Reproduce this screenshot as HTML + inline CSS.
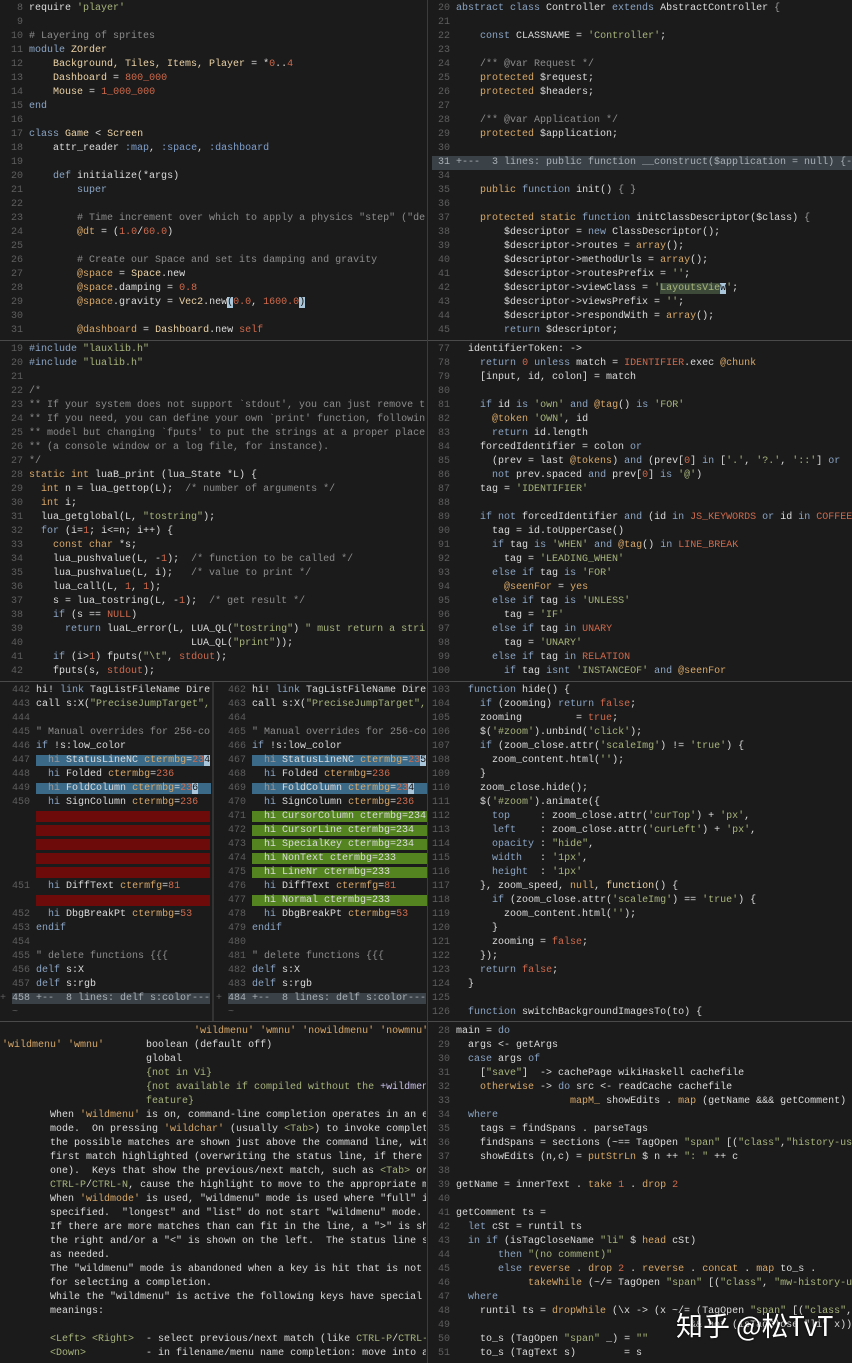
<!DOCTYPE html>
<html><head><meta charset="utf-8"><style>
html,body{margin:0;padding:0;background:#1b1b1b;width:852px;height:1363px;overflow:hidden}
.p{position:absolute;overflow:hidden;font:10px/14px "Liberation Mono",monospace;color:#dcdcdc;white-space:normal}
.p div{height:14px;white-space:pre}
.n{color:#5e5e5e}.k{color:#8aa4c4}.s{color:#a7b47c}.c{color:#8c8c8c}.d{color:#cf6a4c}.y{color:#ecd3a6}.o{color:#d8a868}.sy{color:#7f9fcc}.g{color:#9a9a9a}
.fold{background:#3a4147;color:#a9b0b6}
.hb{background:#3b6a88}.hr{background:#6d0b0b}.hg{background:#53841f}
.cur{background:#a9c6da;color:#111}
.hl{position:absolute;left:0;width:852px;height:1px;background:#4a4a4a}
.vl{position:absolute;width:1px;background:#3c3c3c}
</style></head><body>

<div class="p" style="left:5px;top:2px;width:421px;height:338px">
<div><span class="n">  8 </span>require <span class="s">'player'</span></div>
<div><span class="n">  9 </span></div>
<div><span class="n"> 10 </span><span class="c"># Layering of sprites</span></div>
<div><span class="n"> 11 </span><span class="k">module</span> <span class="y">ZOrder</span></div>
<div><span class="n"> 12 </span>    <span class="y">Background, Tiles, Items, Player</span> = *<span class="d">0</span>..<span class="d">4</span></div>
<div><span class="n"> 13 </span>    <span class="y">Dashboard</span> = <span class="d">800_000</span></div>
<div><span class="n"> 14 </span>    <span class="y">Mouse</span> = <span class="d">1_000_000</span></div>
<div><span class="n"> 15 </span><span class="k">end</span></div>
<div><span class="n"> 16 </span></div>
<div><span class="n"> 17 </span><span class="k">class</span> <span class="y">Game</span> &lt; <span class="y">Screen</span></div>
<div><span class="n"> 18 </span>    attr_reader <span class="sy">:map</span>, <span class="sy">:space</span>, <span class="sy">:dashboard</span></div>
<div><span class="n"> 19 </span></div>
<div><span class="n"> 20 </span>    <span class="k">def</span> initialize(*args)</div>
<div><span class="n"> 21 </span>        <span class="k">super</span></div>
<div><span class="n"> 22 </span></div>
<div><span class="n"> 23 </span>        <span class="c"># Time increment over which to apply a physics "step" ("de</span></div>
<div><span class="n"> 24 </span>        <span class="o">@dt</span> = (<span class="d">1.0</span>/<span class="d">60.0</span>)</div>
<div><span class="n"> 25 </span></div>
<div><span class="n"> 26 </span>        <span class="c"># Create our Space and set its damping and gravity</span></div>
<div><span class="n"> 27 </span>        <span class="o">@space</span> = <span class="y">Space</span>.new</div>
<div><span class="n"> 28 </span>        <span class="o">@space</span>.damping = <span class="d">0.8</span></div>
<div><span class="n"> 29 </span>        <span class="o">@space</span>.gravity = <span class="y">Vec2</span>.new<span class="cur">(</span><span class="d">0.0</span>, <span class="d">1600.0</span><span class="cur">)</span></div>
<div><span class="n"> 30 </span></div>
<div><span class="n"> 31 </span>        <span class="o">@dashboard</span> = <span class="y">Dashboard</span>.new <span class="d">self</span></div>
</div>

<div class="p" style="left:432px;top:2px;width:420px;height:338px">
<div><span class="n"> 20 </span><span class="k">abstract class</span> Controller <span class="k">extends</span> AbstractController <span class="g">{</span></div>
<div><span class="n"> 21 </span></div>
<div><span class="n"> 22 </span>    <span class="k">const</span> CLASSNAME = <span class="s">'Controller'</span>;</div>
<div><span class="n"> 23 </span></div>
<div><span class="n"> 24 </span>    <span class="c">/** @var Request */</span></div>
<div><span class="n"> 25 </span>    <span class="o">protected</span> $request;</div>
<div><span class="n"> 26 </span>    <span class="o">protected</span> $headers;</div>
<div><span class="n"> 27 </span></div>
<div><span class="n"> 28 </span>    <span class="c">/** @var Application */</span></div>
<div><span class="n"> 29 </span>    <span class="o">protected</span> $application;</div>
<div><span class="n"> 30 </span></div>
<div class="fold"> 31 +---  3 lines: public function __construct($application = null) {-</div>
<div><span class="n"> 34 </span></div>
<div><span class="n"> 35 </span>    <span class="o">public</span> <span class="k">function</span> init() <span class="g">{ }</span></div>
<div><span class="n"> 36 </span></div>
<div><span class="n"> 37 </span>    <span class="o">protected static</span> <span class="k">function</span> initClassDescriptor($class) <span class="g">{</span></div>
<div><span class="n"> 38 </span>        $descriptor = <span class="k">new</span> ClassDescriptor();</div>
<div><span class="n"> 39 </span>        $descriptor-&gt;routes = <span class="o">array</span>();</div>
<div><span class="n"> 40 </span>        $descriptor-&gt;methodUrls = <span class="o">array</span>();</div>
<div><span class="n"> 41 </span>        $descriptor-&gt;routesPrefix = <span class="s">''</span>;</div>
<div><span class="n"> 42 </span>        $descriptor-&gt;viewClass = <span class="s">'<span style="background:#3d4a3a">LayoutsVie</span><span class="cur">w</span>'</span>;</div>
<div><span class="n"> 43 </span>        $descriptor-&gt;viewsPrefix = <span class="s">''</span>;</div>
<div><span class="n"> 44 </span>        $descriptor-&gt;respondWith = <span class="o">array</span>();</div>
<div><span class="n"> 45 </span>        <span class="k">return</span> $descriptor;</div>
</div>

<div class="p" style="left:5px;top:343px;width:421px;height:338px">
<div><span class="n"> 19 </span><span class="k">#include</span> <span class="s">"lauxlib.h"</span></div>
<div><span class="n"> 20 </span><span class="k">#include</span> <span class="s">"lualib.h"</span></div>
<div><span class="n"> 21 </span></div>
<div><span class="n"> 22 </span><span class="c">/*</span></div>
<div><span class="n"> 23 </span><span class="c">** If your system does not support `stdout', you can just remove t</span></div>
<div><span class="n"> 24 </span><span class="c">** If you need, you can define your own `print' function, followin</span></div>
<div><span class="n"> 25 </span><span class="c">** model but changing `fputs' to put the strings at a proper place</span></div>
<div><span class="n"> 26 </span><span class="c">** (a console window or a log file, for instance).</span></div>
<div><span class="n"> 27 </span><span class="c">*/</span></div>
<div><span class="n"> 28 </span><span class="o">static int</span> luaB_print (lua_State *L) {</div>
<div><span class="n"> 29 </span>  <span class="o">int</span> n = lua_gettop(L);  <span class="c">/* number of arguments */</span></div>
<div><span class="n"> 30 </span>  <span class="o">int</span> i;</div>
<div><span class="n"> 31 </span>  lua_getglobal(L, <span class="s">"tostring"</span>);</div>
<div><span class="n"> 32 </span>  <span class="k">for</span> (i=<span class="d">1</span>; i&lt;=n; i++) {</div>
<div><span class="n"> 33 </span>    <span class="o">const char</span> *s;</div>
<div><span class="n"> 34 </span>    lua_pushvalue(L, -<span class="d">1</span>);  <span class="c">/* function to be called */</span></div>
<div><span class="n"> 35 </span>    lua_pushvalue(L, i);   <span class="c">/* value to print */</span></div>
<div><span class="n"> 36 </span>    lua_call(L, <span class="d">1</span>, <span class="d">1</span>);</div>
<div><span class="n"> 37 </span>    s = lua_tostring(L, -<span class="d">1</span>);  <span class="c">/* get result */</span></div>
<div><span class="n"> 38 </span>    <span class="k">if</span> (s == <span class="d">NULL</span>)</div>
<div><span class="n"> 39 </span>      <span class="k">return</span> luaL_error(L, LUA_QL(<span class="s">"tostring"</span>) <span class="s">" must return a stri</span></div>
<div><span class="n"> 40 </span>                           LUA_QL(<span class="s">"print"</span>));</div>
<div><span class="n"> 41 </span>    <span class="k">if</span> (i&gt;<span class="d">1</span>) fputs(<span class="s">"\t"</span>, <span class="d">stdout</span>);</div>
<div><span class="n"> 42 </span>    fputs(s, <span class="d">stdout</span>);</div>
</div>

<div class="p" style="left:432px;top:343px;width:420px;height:338px">
<div><span class="n"> 77 </span>  identifierToken: -&gt;</div>
<div><span class="n"> 78 </span>    <span class="k">return</span> <span class="d">0</span> <span class="k">unless</span> match = <span class="d">IDENTIFIER</span>.exec <span class="o">@chunk</span></div>
<div><span class="n"> 79 </span>    [input, id, colon] = match</div>
<div><span class="n"> 80 </span></div>
<div><span class="n"> 81 </span>    <span class="k">if</span> id <span class="k">is</span> <span class="s">'own'</span> <span class="k">and</span> <span class="o">@tag</span>() <span class="k">is</span> <span class="s">'FOR'</span></div>
<div><span class="n"> 82 </span>      <span class="o">@token</span> <span class="s">'OWN'</span>, id</div>
<div><span class="n"> 83 </span>      <span class="k">return</span> id.length</div>
<div><span class="n"> 84 </span>    forcedIdentifier = colon <span class="k">or</span></div>
<div><span class="n"> 85 </span>      (prev = last <span class="o">@tokens</span>) <span class="k">and</span> (prev[<span class="d">0</span>] <span class="k">in</span> [<span class="s">'.'</span>, <span class="s">'?.'</span>, <span class="s">'::'</span>] <span class="k">or</span></div>
<div><span class="n"> 86 </span>      <span class="k">not</span> prev.spaced <span class="k">and</span> prev[<span class="d">0</span>] <span class="k">is</span> <span class="s">'@'</span>)</div>
<div><span class="n"> 87 </span>    tag = <span class="s">'IDENTIFIER'</span></div>
<div><span class="n"> 88 </span></div>
<div><span class="n"> 89 </span>    <span class="k">if not</span> forcedIdentifier <span class="k">and</span> (id <span class="k">in</span> <span class="d">JS_KEYWORDS</span> <span class="k">or</span> id <span class="k">in</span> <span class="d">COFFEE</span></div>
<div><span class="n"> 90 </span>      tag = id.toUpperCase()</div>
<div><span class="n"> 91 </span>      <span class="k">if</span> tag <span class="k">is</span> <span class="s">'WHEN'</span> <span class="k">and</span> <span class="o">@tag</span>() <span class="k">in</span> <span class="d">LINE_BREAK</span></div>
<div><span class="n"> 92 </span>        tag = <span class="s">'LEADING_WHEN'</span></div>
<div><span class="n"> 93 </span>      <span class="k">else if</span> tag <span class="k">is</span> <span class="s">'FOR'</span></div>
<div><span class="n"> 94 </span>        <span class="o">@seenFor</span> = <span class="o">yes</span></div>
<div><span class="n"> 95 </span>      <span class="k">else if</span> tag <span class="k">is</span> <span class="s">'UNLESS'</span></div>
<div><span class="n"> 96 </span>        tag = <span class="s">'IF'</span></div>
<div><span class="n"> 97 </span>      <span class="k">else if</span> tag <span class="k">in</span> <span class="d">UNARY</span></div>
<div><span class="n"> 98 </span>        tag = <span class="s">'UNARY'</span></div>
<div><span class="n"> 99 </span>      <span class="k">else if</span> tag <span class="k">in</span> <span class="d">RELATION</span></div>
<div><span class="n">100 </span>        <span class="k">if</span> tag <span class="k">isnt</span> <span class="s">'INSTANCEOF'</span> <span class="k">and</span> <span class="o">@seenFor</span></div>
</div>

<div class="p" style="left:0px;top:684px;width:211px;height:336px">
<div><span class="n">  442 </span>hi! <span class="k">link</span> TagListFileName Dire</div>
<div><span class="n">  443 </span>call s:X(<span class="s">"PreciseJumpTarget",</span></div>
<div><span class="n">  444 </span></div>
<div><span class="n">  445 </span><span class="c">" Manual overrides for 256-co</span></div>
<div><span class="n">  446 </span><span class="k">if</span> !s:low_color</div>
<div><span class="n">  447 </span><span class="hb">  <span class="g">hi</span> StatusLineNC <span class="o">ctermbg</span>=<span class="d">23</span><span class="cur">4</span></span></div>
<div><span class="n">  448 </span>  <span class="k">hi</span> Folded <span class="o">ctermbg</span>=<span class="d">236</span></div>
<div><span class="n">  449 </span><span class="hb">  <span class="g">hi</span> FoldColumn <span class="o">ctermbg</span>=<span class="d">23</span><span class="cur">6</span>      </span></div>
<div><span class="n">  450 </span>  <span class="k">hi</span> SignColumn <span class="o">ctermbg</span>=<span class="d">236</span></div>
<div><span class="n">      </span><span class="hr">                             </span></div>
<div><span class="n">      </span><span class="hr">                             </span></div>
<div><span class="n">      </span><span class="hr">                             </span></div>
<div><span class="n">      </span><span class="hr">                             </span></div>
<div><span class="n">      </span><span class="hr">                             </span></div>
<div><span class="n">  451 </span>  <span class="k">hi</span> DiffText <span class="o">ctermfg</span>=<span class="d">81</span></div>
<div><span class="n">      </span><span class="hr">                             </span></div>
<div><span class="n">  452 </span>  <span class="k">hi</span> DbgBreakPt <span class="o">ctermbg</span>=<span class="d">53</span></div>
<div><span class="n">  453 </span><span class="k">endif</span></div>
<div><span class="n">  454 </span></div>
<div><span class="n">  455 </span><span class="c">" delete functions {{{</span></div>
<div><span class="n">  456 </span><span class="k">delf</span> s:X</div>
<div><span class="n">  457 </span><span class="k">delf</span> s:rgb</div>
<div><span class="n">+ </span><span class="fold">458 +--  8 lines: delf s:color---</span></div>
<div><span class="n">  ~</span></div>
</div>

<div class="p" style="left:216px;top:684px;width:211px;height:336px">
<div><span class="n">  462 </span>hi! <span class="k">link</span> TagListFileName Dire</div>
<div><span class="n">  463 </span>call s:X(<span class="s">"PreciseJumpTarget",</span></div>
<div><span class="n">  464 </span></div>
<div><span class="n">  465 </span><span class="c">" Manual overrides for 256-co</span></div>
<div><span class="n">  466 </span><span class="k">if</span> !s:low_color</div>
<div><span class="n">  467 </span><span class="hb">  <span class="g">hi</span> StatusLineNC <span class="o">ctermbg</span>=<span class="d">23</span><span class="cur">5</span></span></div>
<div><span class="n">  468 </span>  <span class="k">hi</span> Folded <span class="o">ctermbg</span>=<span class="d">236</span></div>
<div><span class="n">  469 </span><span class="hb">  <span class="g">hi</span> FoldColumn <span class="o">ctermbg</span>=<span class="d">23</span><span class="cur">4</span>      </span></div>
<div><span class="n">  470 </span>  <span class="k">hi</span> SignColumn <span class="o">ctermbg</span>=<span class="d">236</span></div>
<div><span class="n">  471 </span><span class="hg">  hi CursorColumn ctermbg=234 </span></div>
<div><span class="n">  472 </span><span class="hg">  hi CursorLine ctermbg=234   </span></div>
<div><span class="n">  473 </span><span class="hg">  hi SpecialKey ctermbg=234   </span></div>
<div><span class="n">  474 </span><span class="hg">  hi NonText ctermbg=233      </span></div>
<div><span class="n">  475 </span><span class="hg">  hi LineNr ctermbg=233       </span></div>
<div><span class="n">  476 </span>  <span class="k">hi</span> DiffText <span class="o">ctermfg</span>=<span class="d">81</span></div>
<div><span class="n">  477 </span><span class="hg">  hi Normal ctermbg=233       </span></div>
<div><span class="n">  478 </span>  <span class="k">hi</span> DbgBreakPt <span class="o">ctermbg</span>=<span class="d">53</span></div>
<div><span class="n">  479 </span><span class="k">endif</span></div>
<div><span class="n">  480 </span></div>
<div><span class="n">  481 </span><span class="c">" delete functions {{{</span></div>
<div><span class="n">  482 </span><span class="k">delf</span> s:X</div>
<div><span class="n">  483 </span><span class="k">delf</span> s:rgb</div>
<div><span class="n">+ </span><span class="fold">484 +--  8 lines: delf s:color---</span></div>
<div><span class="n">  ~</span></div>
</div>

<div class="p" style="left:432px;top:684px;width:420px;height:336px">
<div><span class="n">103 </span>  <span class="k">function</span> hide() {</div>
<div><span class="n">104 </span>    <span class="k">if</span> (zooming) <span class="k">return</span> <span class="d">false</span>;</div>
<div><span class="n">105 </span>    zooming         = <span class="d">true</span>;</div>
<div><span class="n">106 </span>    $(<span class="s">'#zoom'</span>).unbind(<span class="s">'click'</span>);</div>
<div><span class="n">107 </span>    <span class="k">if</span> (zoom_close.attr(<span class="s">'scaleImg'</span>) != <span class="s">'true'</span>) {</div>
<div><span class="n">108 </span>      zoom_content.html(<span class="s">''</span>);</div>
<div><span class="n">109 </span>    }</div>
<div><span class="n">110 </span>    zoom_close.hide();</div>
<div><span class="n">111 </span>    $(<span class="s">'#zoom'</span>).animate({</div>
<div><span class="n">112 </span>      <span class="k">top</span>     : zoom_close.attr(<span class="s">'curTop'</span>) + <span class="s">'px'</span>,</div>
<div><span class="n">113 </span>      <span class="k">left</span>    : zoom_close.attr(<span class="s">'curLeft'</span>) + <span class="s">'px'</span>,</div>
<div><span class="n">114 </span>      <span class="k">opacity</span> : <span class="s">"hide"</span>,</div>
<div><span class="n">115 </span>      <span class="k">width</span>   : <span class="s">'1px'</span>,</div>
<div><span class="n">116 </span>      <span class="k">height</span>  : <span class="s">'1px'</span></div>
<div><span class="n">117 </span>    }, zoom_speed, <span class="o">null</span>, <span class="y">function</span>() {</div>
<div><span class="n">118 </span>      <span class="k">if</span> (zoom_close.attr(<span class="s">'scaleImg'</span>) == <span class="s">'true'</span>) {</div>
<div><span class="n">119 </span>        zoom_content.html(<span class="s">''</span>);</div>
<div><span class="n">120 </span>      }</div>
<div><span class="n">121 </span>      zooming = <span class="d">false</span>;</div>
<div><span class="n">122 </span>    });</div>
<div><span class="n">123 </span>    <span class="k">return</span> <span class="d">false</span>;</div>
<div><span class="n">124 </span>  }</div>
<div><span class="n">125 </span></div>
<div><span class="n">126 </span>  <span class="k">function</span> switchBackgroundImagesTo(to) {</div>
</div>

<div class="p" style="left:2px;top:1025px;width:424px;height:338px">
<div>                                <span class="o">'wildmenu'</span> <span class="o">'wmnu'</span> <span class="o">'nowildmenu'</span> <span class="o">'nowmnu'</span></div>
<div><span class="o">'wildmenu'</span> <span class="o">'wmnu'</span>       boolean (default off)</div>
<div>                        global</div>
<div>                        <span class="s">{not in Vi}</span></div>
<div>                        <span class="s">{not available if compiled without the </span><span style="color:#c8c0e8">+wildmenu</span></div>
<div>                        <span class="s">feature}</span></div>
<div>        When <span class="o">'wildmenu'</span> is on, command-line completion operates in an e</div>
<div>        mode.  On pressing <span class="o">'wildchar'</span> (usually <span class="s">&lt;Tab&gt;</span>) to invoke complet</div>
<div>        the possible matches are shown just above the command line, wit</div>
<div>        first match highlighted (overwriting the status line, if there </div>
<div>        one).  Keys that show the previous/next match, such as <span class="s">&lt;Tab&gt;</span> or</div>
<div>        <span class="s">CTRL-P</span>/<span class="s">CTRL-N</span>, cause the highlight to move to the appropriate m</div>
<div>        When <span class="o">'wildmode'</span> is used, "wildmenu" mode is used where "full" i</div>
<div>        specified.  "longest" and "list" do not start "wildmenu" mode.</div>
<div>        If there are more matches than can fit in the line, a "&gt;" is sh</div>
<div>        the right and/or a "&lt;" is shown on the left.  The status line s</div>
<div>        as needed.</div>
<div>        The "wildmenu" mode is abandoned when a key is hit that is not </div>
<div>        for selecting a completion.</div>
<div>        While the "wildmenu" is active the following keys have special</div>
<div>        meanings:</div>
<div></div>
<div>        <span class="s">&lt;Left&gt; &lt;Right&gt;</span>  - select previous/next match (like <span class="s">CTRL-P</span>/<span class="s">CTRL-</span></div>
<div>        <span class="s">&lt;Down&gt;</span>          - in filename/menu name completion: move into a</div>
</div>

<div class="p" style="left:432px;top:1025px;width:420px;height:338px">
<div><span class="n"> 28 </span>main = <span class="k">do</span></div>
<div><span class="n"> 29 </span>  args &lt;- getArgs</div>
<div><span class="n"> 30 </span>  <span class="k">case</span> args <span class="k">of</span></div>
<div><span class="n"> 31 </span>    [<span class="s">"save"</span>]  -&gt; cachePage wikiHaskell cachefile</div>
<div><span class="n"> 32 </span>    <span class="o">otherwise</span> -&gt; <span class="k">do</span> src &lt;- readCache cachefile</div>
<div><span class="n"> 33 </span>                   <span class="o">mapM_</span> showEdits . <span class="o">map</span> (getName &amp;&amp;&amp; getComment)</div>
<div><span class="n"> 34 </span>  <span class="k">where</span></div>
<div><span class="n"> 35 </span>    tags = findSpans . parseTags</div>
<div><span class="n"> 36 </span>    findSpans = sections (~== TagOpen <span class="s">"span"</span> [(<span class="s">"class"</span>,<span class="s">"history-us</span></div>
<div><span class="n"> 37 </span>    showEdits (n,c) = <span class="o">putStrLn</span> $ n ++ <span class="s">": "</span> ++ c</div>
<div><span class="n"> 38 </span></div>
<div><span class="n"> 39 </span>getName = innerText . <span class="o">take</span> <span class="d">1</span> . <span class="o">drop</span> <span class="d">2</span></div>
<div><span class="n"> 40 </span></div>
<div><span class="n"> 41 </span>getComment ts =</div>
<div><span class="n"> 42 </span>  <span class="k">let</span> cSt = runtil ts</div>
<div><span class="n"> 43 </span>  <span class="k">in if</span> (isTagCloseName <span class="s">"li"</span> $ <span class="o">head</span> cSt)</div>
<div><span class="n"> 44 </span>       <span class="k">then</span> <span class="s">"(no comment)"</span></div>
<div><span class="n"> 45 </span>       <span class="k">else</span> <span class="o">reverse</span> . <span class="o">drop</span> <span class="d">2</span> . <span class="o">reverse</span> . <span class="o">concat</span> . <span class="o">map</span> to_s .</div>
<div><span class="n"> 46 </span>            <span class="o">takeWhile</span> (~/= TagOpen <span class="s">"span"</span> [(<span class="s">"class"</span>, <span class="s">"mw-history-u</span></div>
<div><span class="n"> 47 </span>  <span class="k">where</span></div>
<div><span class="n"> 48 </span>    runtil ts = <span class="o">dropWhile</span> (\x -&gt; (x ~/= (TagOpen <span class="s">"span"</span> [(<span class="s">"class"</span>,</div>
<div><span class="n"> 49 </span>                                       &amp;&amp; not (isTagClose "li" x)) t</div>
<div><span class="n"> 50 </span>    to_s (TagOpen <span class="s">"span"</span> _) = <span class="s">""</span></div>
<div><span class="n"> 51 </span>    to_s (TagText s)        = s</div>
</div>

<div style="position:absolute;left:676px;top:1308px;font:27px/34px 'Noto Sans CJK SC',sans-serif;color:#fff;text-shadow:0 0 2px #000">知乎 @松TvT</div>

<div class="hl" style="top:340px"></div>
<div class="hl" style="top:681px"></div>
<div class="hl" style="top:1021px"></div>
<div class="vl" style="left:427px;top:0;height:1363px"></div>
<div class="vl" style="left:212px;top:682px;height:339px;width:2px;background:#333"></div>
</body></html>
